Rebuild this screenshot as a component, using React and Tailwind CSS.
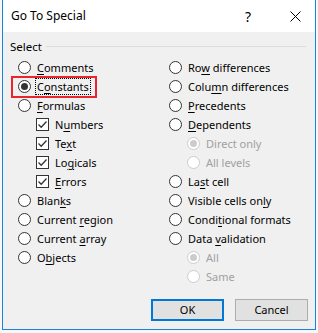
import React from "react"

const font = { fontFamily: '"Noto Sans", "Open Sans", sans-serif' }

function Radio({ checked, disabled }) {
  return (
    <span className={`flex items-center justify-center w-[13px] h-[13px] rounded-full border bg-white ${disabled ? "border-[#cccccc]" : "border-[#333333]"}`}>
      {checked && <span className={`w-[7px] h-[7px] rounded-full ${disabled ? "bg-[#cccccc]" : "bg-[#333333]"}`} />}
    </span>
  )
}

function Check() {
  return (
    <span className="flex items-center justify-center w-[13px] h-[13px] border border-[#333333] bg-white">
      <svg width="11" height="11" viewBox="0 0 11 11">
        <path d="M1.5 5.5 L4.2 8.2 L9.5 2.5" fill="none" stroke="#333" strokeWidth="1.3" />
      </svg>
    </span>
  )
}

// label with access key underlined
function Label({ text, k, disabled }) {
  const before = text.slice(0, k)
  const key = text.slice(k, k + 1)
  const after = text.slice(k + 1)
  return (
    <span className={`whitespace-nowrap ${disabled ? "text-[#a0a0a0]" : "text-black"}`}>
      {before}
      {disabled ? key : <span className="underline underline-offset-[2px]">{key}</span>}
      {after}
    </span>
  )
}

function Row({ indent = 0, type = "radio", checked, disabled, text, k, focus }) {
  return (
    <div className="h-[19px] flex items-center" style={{ paddingLeft: indent }}>
      {type === "radio" ? <Radio checked={checked} disabled={disabled} /> : <Check />}
      <span className={`ml-[5px] leading-[15px] px-[1px] ${focus ? "outline outline-1 outline-dotted outline-black" : ""}`}>
        <Label text={text} k={k} disabled={disabled} />
      </span>
    </div>
  )
}

export default function App() {
  const left = [
    { text: "Comments", k: 0 },
    { text: "Constants", k: 1, checked: true, focus: true },
    { text: "Formulas", k: 0 },
    { text: "Numbers", k: 1, type: "check", indent: 18 },
    { text: "Text", k: 2, type: "check", indent: 18 },
    { text: "Logicals", k: 2, type: "check", indent: 18 },
    { text: "Errors", k: 0, type: "check", indent: 18 },
    { text: "Blanks", k: 4 },
    { text: "Current region", k: 8 },
    { text: "Current array", k: 8 },
    { text: "Objects", k: 1 },
  ]
  const right = [
    { text: "Row differences", k: 2 },
    { text: "Column differences", k: 4 },
    { text: "Precedents", k: 0 },
    { text: "Dependents", k: 0 },
    { text: "Direct only", k: 1, indent: 18, disabled: true, checked: true },
    { text: "All levels", k: 4, indent: 18, disabled: true },
    { text: "Last cell", k: 2 },
    { text: "Visible cells only", k: 16 },
    { text: "Conditional formats", k: 5 },
    { text: "Data validation", k: 5 },
    { text: "All", k: 1, indent: 18, disabled: true, checked: true },
    { text: "Same", k: 3, indent: 18, disabled: true },
  ]

  return (
    <div className="w-[318px] h-[333px] overflow-hidden bg-[#f7f7f7] text-[11px]" style={font}>
      <div className="relative ml-[2px] w-[314px] h-[330px] border border-t-0 border-[#1883d7] bg-[#f0f0f0] flex flex-col">
        {/* title bar */}
        <div className="h-[32px] bg-white flex items-center pl-[8px] shrink-0">
          <span className="text-[12px] text-black">Go To Special</span>
          <span className="ml-auto w-[20px] text-center text-[14px] text-black mr-[27px]">?</span>
          <span className="w-[20px] flex justify-center mr-[10px]">
            <svg width="11" height="11" viewBox="0 0 11 11">
              <path d="M0.5 0.5 L10.5 10.5 M10.5 0.5 L0.5 10.5" stroke="#000" strokeWidth="1" />
            </svg>
          </span>
        </div>

        <div className="pt-[5px] px-[7px] flex flex-col flex-1">
          <div className="h-[21px] flex items-center pb-[2px]">
            <span className="text-black text-[11.5px]">Select</span>
            <div className="flex-1 h-px bg-[#dcdcdc] ml-[4px] mr-[2px]" />
          </div>

          <div className="flex">
            <div className="w-[158px] pl-[8px] flex flex-col">
              {left.map((r) => (
                <Row key={r.text} {...r} />
              ))}
            </div>
            <div className="flex-1 pl-[1px] flex flex-col">
              {right.map((r) => (
                <Row key={r.text} {...r} />
              ))}
            </div>
          </div>

          <div className="flex justify-end gap-[11px] mt-[13px]">
            <button className="w-[73px] h-[22px] border-2 border-[#0078d7] bg-[#e1e1e1] text-black">OK</button>
            <button className="w-[73px] h-[22px] border border-[#adadad] bg-[#e1e1e1] text-black">Cancel</button>
          </div>
        </div>

        {/* red annotation box */}
        <div className="absolute left-[8px] top-[76px] w-[86px] h-[22px] border-2 border-[#e8262b]" />
      </div>
    </div>
  )
}
